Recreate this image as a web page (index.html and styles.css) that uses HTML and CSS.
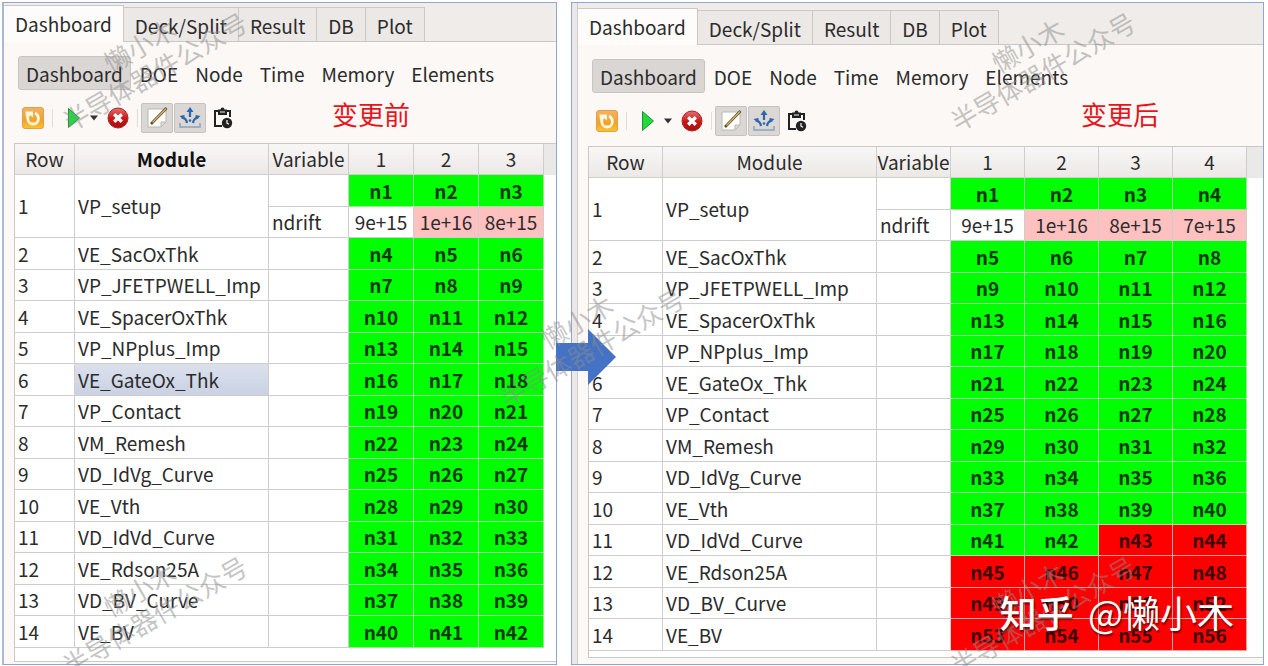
FILE: index.html
```html
<!DOCTYPE html>
<html lang="zh-CN">
<head>
<meta charset="utf-8">
<title>Dashboard</title>
<link rel="stylesheet" href="styles.css">
</head>
<body>
<svg class="defs" aria-hidden="true">
  <defs>
    <linearGradient id="gold" x1="0" y1="0" x2="0" y2="1"><stop offset="0" stop-color="#f0b466"/><stop offset=".6" stop-color="#f0a22c"/><stop offset="1" stop-color="#fac42e"/></linearGradient>
    <linearGradient id="red" x1="0" y1="0" x2="0" y2="1"><stop offset="0" stop-color="#e57272"/><stop offset=".5" stop-color="#cc1a1a"/><stop offset="1" stop-color="#a80c0c"/></linearGradient>
    <symbol id="i-reload" viewBox="0 0 22 22"><rect x=".5" y=".5" width="21" height="21" rx="2.5" fill="url(#gold)" stroke="#e2a04a"/><path d="M5.800 9v2.700a5.300 5.300 0 0 0 10.600 0c0-2.600-1.400-4.700-3.400-5.700" fill="none" stroke="#fff6dc" stroke-width="2.800"/><path d="M3.500 4.500h7.500v6l-2.500-2-4.500 2z" fill="#fff6dc"/></symbol>
    <symbol id="i-play" viewBox="0 0 14 22"><path d="M1.500 1.500 12.500 11 1.500 20.500z" fill="#1fdc3c" stroke="#2b8a35" stroke-linejoin="round"/></symbol>
    <symbol id="i-caret" viewBox="0 0 10 6"><path d="M1 .5h8L5 5.500z" fill="#333"/></symbol>
    <symbol id="i-stop" viewBox="0 0 22 22"><circle cx="11" cy="11" r="10" fill="url(#red)" stroke="#b52222"/><path d="m7.200 7.200 7.600 7.600m0-7.600-7.600 7.600" stroke="#fff" stroke-width="3.400"/></symbol>
    <symbol id="i-edit" viewBox="0 0 24 24"><path d="M3 3h18v13l-5 5H3z" fill="#fdfdfb" stroke="#b9b9b5"/><path d="M21 16h-5v5z" fill="#ddd" stroke="#b9b9b5"/><path d="M6 18 21.500 2" stroke="#5b4a28" stroke-width="2.600"/><path d="M7.500 16.500 21 2.500" stroke="#d9b569" stroke-width="1.200"/></symbol>
    <symbol id="i-tree" viewBox="0 0 24 24"><path d="M2 17v4h20v-4" fill="none" stroke="#8ea3bf" stroke-width="1.500"/><g fill="none" stroke="#2d66ad" stroke-width="2.200"><path d="M12 11V5M3.500 11.500c3 .2 5 2 5.500 5.500M20.500 11.500c-3 .2-5 2-5.500 5.500"/></g><path d="M12 1 8.500 6h7zM1.500 10l5-1v5zM22.500 10l-5-1v5z" fill="#2d66ad"/><circle cx="12" cy="14.500" r="1.300" fill="#2d66ad"/></symbol>
    <symbol id="i-clip" viewBox="0 0 20 22"><path d="M9 19H2V4h15v6" fill="none" stroke="#222" stroke-width="2"/><path d="M5 2.500h2.500a2 2 0 0 1 4 0H14V8H5z" fill="#222"/><path d="M7 5h5" stroke="#f4f2f0"/><circle cx="14" cy="16" r="5.200" fill="#222"/><path d="M14 13v3.200l2 1" fill="none" stroke="#fff" stroke-width="1.200"/></symbol>
  </defs>
</svg>
<main class="compare">
  <section class="panel before">
    <nav class="tabs"><button class="tab active">Dashboard</button><button class="tab">Deck/Split</button><button class="tab">Result</button><button class="tab">DB</button><button class="tab">Plot</button></nav>
    <div class="views"><button class="view on">Dashboard</button><button class="view">DOE</button><button class="view">Node</button><button class="view">Time</button><button class="view">Memory</button><button class="view">Elements</button></div>
    <div class="tools">
      <button class="tool" aria-label="Reload"><svg width="22" height="22"><use href="#i-reload"/></svg></button><i class="sep"></i>
      <button class="tool run" aria-label="Run"><svg width="14" height="22"><use href="#i-play"/></svg><svg width="10" height="6"><use href="#i-caret"/></svg></button>
      <button class="tool" aria-label="Abort"><svg width="22" height="22"><use href="#i-stop"/></svg></button><i class="sep"></i>
      <button class="tool pressed" aria-label="Edit"><svg width="24" height="24"><use href="#i-edit"/></svg></button>
      <button class="tool pressed" aria-label="Tree"><svg width="24" height="24"><use href="#i-tree"/></svg></button>
      <button class="tool clip" aria-label="Schedule"><svg width="20" height="22"><use href="#i-clip"/></svg></button>
    </div>
    <strong class="note">变更前</strong>
    <div class="sheet">
      <table>
        <colgroup><col class="c-row"><col><col class="c-var"><col class="c-n"><col class="c-n"><col class="c-n"><col class="c-end"></colgroup>
        <thead><tr><th>Row</th><th class="sorted">Module</th><th>Variable</th><th>1</th><th>2</th><th>3</th><th class="end"></th></tr></thead>
        <tbody>
          <tr><td rowspan="2">1</td><td rowspan="2">VP_setup</td><td></td><td class="ok">n1</td><td class="ok">n2</td><td class="ok">n3</td></tr>
          <tr><td>ndrift</td><td class="val">9e+15</td><td class="val diff">1e+16</td><td class="val diff">8e+15</td></tr>
          <tr><td>2</td><td>VE_SacOxThk</td><td></td><td class="ok">n4</td><td class="ok">n5</td><td class="ok">n6</td></tr>
          <tr><td>3</td><td>VP_JFETPWELL_Imp</td><td></td><td class="ok">n7</td><td class="ok">n8</td><td class="ok">n9</td></tr>
          <tr><td>4</td><td>VE_SpacerOxThk</td><td></td><td class="ok">n10</td><td class="ok">n11</td><td class="ok">n12</td></tr>
          <tr><td>5</td><td>VP_NPplus_Imp</td><td></td><td class="ok">n13</td><td class="ok">n14</td><td class="ok">n15</td></tr>
          <tr><td>6</td><td class="selected">VE_GateOx_Thk</td><td></td><td class="ok">n16</td><td class="ok">n17</td><td class="ok">n18</td></tr>
          <tr><td>7</td><td>VP_Contact</td><td></td><td class="ok">n19</td><td class="ok">n20</td><td class="ok">n21</td></tr>
          <tr><td>8</td><td>VM_Remesh</td><td></td><td class="ok">n22</td><td class="ok">n23</td><td class="ok">n24</td></tr>
          <tr><td>9</td><td>VD_IdVg_Curve</td><td></td><td class="ok">n25</td><td class="ok">n26</td><td class="ok">n27</td></tr>
          <tr><td>10</td><td>VE_Vth</td><td></td><td class="ok">n28</td><td class="ok">n29</td><td class="ok">n30</td></tr>
          <tr><td>11</td><td>VD_IdVd_Curve</td><td></td><td class="ok">n31</td><td class="ok">n32</td><td class="ok">n33</td></tr>
          <tr><td>12</td><td>VE_Rdson25A</td><td></td><td class="ok">n34</td><td class="ok">n35</td><td class="ok">n36</td></tr>
          <tr><td>13</td><td>VD_BV_Curve</td><td></td><td class="ok">n37</td><td class="ok">n38</td><td class="ok">n39</td></tr>
          <tr><td>14</td><td>VE_BV</td><td></td><td class="ok">n40</td><td class="ok">n41</td><td class="ok">n42</td></tr>
        </tbody>
      </table>
    </div>
    <p class="mark mark-top">懒小木<br>半导体器件公众号</p>
    <p class="mark mark-bottom">懒小木<br>半导体器件公众号</p>
  </section>

  <section class="panel after">
    <nav class="tabs"><button class="tab active">Dashboard</button><button class="tab">Deck/Split</button><button class="tab">Result</button><button class="tab">DB</button><button class="tab">Plot</button></nav>
    <div class="views"><button class="view on">Dashboard</button><button class="view">DOE</button><button class="view">Node</button><button class="view">Time</button><button class="view">Memory</button><button class="view">Elements</button></div>
    <div class="tools">
      <button class="tool" aria-label="Reload"><svg width="22" height="22"><use href="#i-reload"/></svg></button><i class="sep"></i>
      <button class="tool run" aria-label="Run"><svg width="14" height="22"><use href="#i-play"/></svg><svg width="10" height="6"><use href="#i-caret"/></svg></button>
      <button class="tool" aria-label="Abort"><svg width="22" height="22"><use href="#i-stop"/></svg></button><i class="sep"></i>
      <button class="tool pressed" aria-label="Edit"><svg width="24" height="24"><use href="#i-edit"/></svg></button>
      <button class="tool pressed" aria-label="Tree"><svg width="24" height="24"><use href="#i-tree"/></svg></button>
      <button class="tool clip" aria-label="Schedule"><svg width="20" height="22"><use href="#i-clip"/></svg></button>
    </div>
    <strong class="note">变更后</strong>
    <div class="sheet">
      <table>
        <colgroup><col class="c-row"><col><col class="c-var"><col class="c-n"><col class="c-n"><col class="c-n"><col class="c-n"><col class="c-end"></colgroup>
        <thead><tr><th>Row</th><th>Module</th><th>Variable</th><th>1</th><th>2</th><th>3</th><th>4</th><th class="end"></th></tr></thead>
        <tbody>
          <tr><td rowspan="2">1</td><td rowspan="2">VP_setup</td><td></td><td class="ok">n1</td><td class="ok">n2</td><td class="ok">n3</td><td class="ok">n4</td></tr>
          <tr><td>ndrift</td><td class="val">9e+15</td><td class="val diff">1e+16</td><td class="val diff">8e+15</td><td class="val diff">7e+15</td></tr>
          <tr><td>2</td><td>VE_SacOxThk</td><td></td><td class="ok">n5</td><td class="ok">n6</td><td class="ok">n7</td><td class="ok">n8</td></tr>
          <tr><td>3</td><td>VP_JFETPWELL_Imp</td><td></td><td class="ok">n9</td><td class="ok">n10</td><td class="ok">n11</td><td class="ok">n12</td></tr>
          <tr><td>4</td><td>VE_SpacerOxThk</td><td></td><td class="ok">n13</td><td class="ok">n14</td><td class="ok">n15</td><td class="ok">n16</td></tr>
          <tr><td>5</td><td>VP_NPplus_Imp</td><td></td><td class="ok">n17</td><td class="ok">n18</td><td class="ok">n19</td><td class="ok">n20</td></tr>
          <tr><td>6</td><td>VE_GateOx_Thk</td><td></td><td class="ok">n21</td><td class="ok">n22</td><td class="ok">n23</td><td class="ok">n24</td></tr>
          <tr><td>7</td><td>VP_Contact</td><td></td><td class="ok">n25</td><td class="ok">n26</td><td class="ok">n27</td><td class="ok">n28</td></tr>
          <tr><td>8</td><td>VM_Remesh</td><td></td><td class="ok">n29</td><td class="ok">n30</td><td class="ok">n31</td><td class="ok">n32</td></tr>
          <tr><td>9</td><td>VD_IdVg_Curve</td><td></td><td class="ok">n33</td><td class="ok">n34</td><td class="ok">n35</td><td class="ok">n36</td></tr>
          <tr><td>10</td><td>VE_Vth</td><td></td><td class="ok">n37</td><td class="ok">n38</td><td class="ok">n39</td><td class="ok">n40</td></tr>
          <tr><td>11</td><td>VD_IdVd_Curve</td><td></td><td class="ok">n41</td><td class="ok">n42</td><td class="fail">n43</td><td class="fail">n44</td></tr>
          <tr><td>12</td><td>VE_Rdson25A</td><td></td><td class="fail">n45</td><td class="fail">n46</td><td class="fail">n47</td><td class="fail">n48</td></tr>
          <tr><td>13</td><td>VD_BV_Curve</td><td></td><td class="fail">n49</td><td class="fail">n50</td><td class="fail">n51</td><td class="fail">n52</td></tr>
          <tr><td>14</td><td>VE_BV</td><td></td><td class="fail">n53</td><td class="fail">n54</td><td class="fail">n55</td><td class="fail">n56</td></tr>
        </tbody>
      </table>
    </div>
    <svg class="arrow" width="60" height="56" viewBox="0 0 60 56" aria-hidden="true"><path d="M0 14h32V0l28 28-28 28V42H0z" fill="#4472c4"/></svg>
    <p class="mark mark-top">懒小木<br>半导体器件公众号</p>
    <p class="mark mark-middle">懒小木<br>半导体器件公众号</p>
    <p class="mark mark-bottom">懒小木<br>半导体器件公众号</p>
    <p class="credit"><b>知乎</b> @懒小木</p>
  </section>
</main>
</body>
</html>
```
FILE: styles.css
```css
* { box-sizing: border-box; }
body {
  margin: 0;
  background: #fff;
  color: #2b2b2b;
  font: 19px/24px "Noto Sans CJK SC", sans-serif;
  overflow: hidden;
}
button { font: inherit; color: inherit; margin: 0; padding: 0; border: 0; background: none; }
.defs { position: absolute; width: 0; height: 0; }

.compare {
  display: grid;
  grid-template-columns: 555fr 693fr;
  gap: 14px;
  min-height: 100vh;
  padding: 2px 4px 1px 2px;
}
.panel {
  position: relative;
  display: flex;
  flex-direction: column;
  border: 1px solid #8fa6cf;
  background: #fcf8f5;
}
.before { border-left: 2px solid #a9b9d3; }
.after { padding-left: 6px; background: linear-gradient(90deg, #ebe8e7 5px, #d0cccb 5px, #d0cccb 6px, #fcf8f5 6px); }

.tabs {
  display: flex;
  align-items: flex-end;
  height: 39px;
  background: #efecea;
  box-shadow: inset 0 -1px #cbc7c4;
}
.after .tabs { height: 42px; }
.tab {
  height: 35px;
  padding: 2px 11px 0;
  border: 1px solid #cbc7c4;
  border-left: 0;
  background: #ebe8e6;
}
.tab.active { height: 37px; border-bottom: 0; background: #fefcfa; padding-top: 0; }

.views { display: flex; gap: 1px; margin: 14px 0 13px 14px; }
.view { height: 34px; padding: 2px 8px 0; }
.view.on { border: 1px solid #c9c4c1; border-radius: 3px; background: #dad6d4; padding: 2px 7px 0; }

.tools { display: flex; align-items: center; height: 30px; margin: 0 0 10px 18px; }
.tool { display: flex; align-items: center; justify-content: center; height: 30px; }
.sep { width: 1px; height: 18px; margin: 0 3px 0 8px; background: #e0dcd9; }
.run { gap: 8px; margin: 0 8px 0 11px; }
.pressed { width: 32px; margin-right: 1px; border: 1px solid #c6c2bf; border-radius: 2px; background: #dad7d5; }
.clip { margin-left: 6px; }

.note {
  position: absolute;
  top: 99px;
  right: 146px;
  color: #e8141c;
  font-size: 26px;
  font-weight: 400;
}
.after .note { right: 104px; }

.sheet {
  flex: 1;
  margin: 0 0 2px 10px;
  border: 1px solid #cbc8c5;
  border-right: 0;
  background: #fff;
}
.after .sheet { margin-bottom: 6px; }
table { width: 100%; table-layout: fixed; border-collapse: separate; border-spacing: 0; }
.c-row { width: 60px; }
.c-var { width: 80px; }
.c-n { width: 65px; }
.c-end { width: 12px; }
.after .c-row { width: 74px; }
.after .c-var, .after .c-n { width: 74px; }
.after .c-end { width: 16px; }

th, td {
  height: 32px;
  padding: 0 3px;
  border: solid #d0cecc;
  border-width: 0 1px 1px 0;
  text-align: left;
  white-space: nowrap;
}
tr:nth-child(even) td, th { height: 31px; }
th {
  padding: 0;
  font-weight: 400;
  text-align: center;
  background: linear-gradient(#f9f7f6, #ebe8e6);
}
th.sorted { font-weight: 700; color: #111; }
th.end { border: 0; background: #ebe9e7; }
.ok, .fail, .val { text-align: center; padding: 0; }
.ok, .fail { font-weight: 700; }
.ok { background: #00ff00; color: #063806; border-color: #9be89b; }
.fail { background: #ff0000; color: #3c0404; border-color: #f3a3a3; }
.diff { background: #ffc0c0; }
.selected { background: linear-gradient(#dbe0ec, #c9d2e3); }

.arrow { position: absolute; left: -16px; top: 326px; }

.mark {
  position: absolute;
  width: 208px;
  margin: 0;
  color: rgba(140, 140, 140, 0.5);
  font-size: 26px;
  font-weight: 400;
  line-height: 30px;
  text-align: center;
  white-space: nowrap;
  transform: rotate(-30deg);
  pointer-events: none;
}
.before .mark { left: 39px; }
.mark-top { top: 25px; }
.mark-bottom { bottom: 32px; }
.after .mark { right: 124px; }
.after .mark-middle { top: 301px; left: -92px; right: auto; }

.credit {
  position: absolute;
  right: 29px;
  bottom: 30px;
  margin: 0;
  color: #fff;
  font-size: 37px;
  line-height: 44px;
  text-shadow: 1px 2px 2px rgba(0, 0, 0, 0.6);
  white-space: nowrap;
}
.credit b { margin-right: 6px; font-weight: 500; }
```
